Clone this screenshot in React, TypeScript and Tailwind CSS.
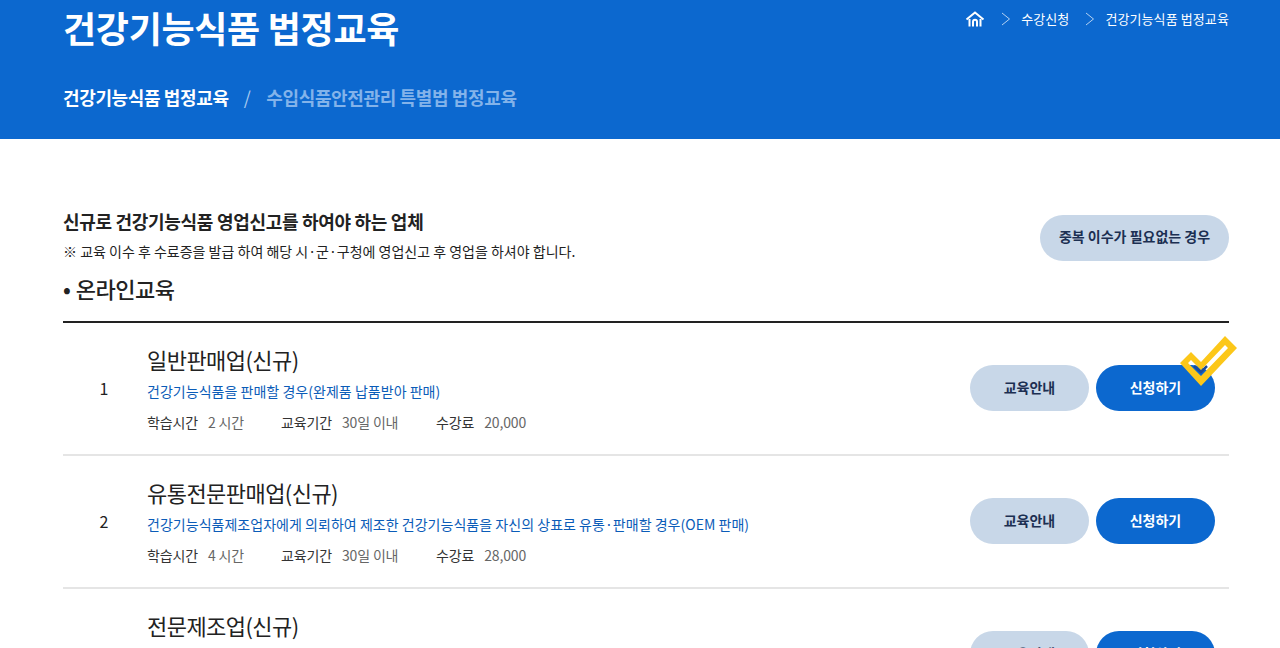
import React from 'react'

const FONT = "font-['Noto_Sans_CJK_KR','Noto_Sans',sans-serif]"

const COURSES = [
  {
    no: 1,
    title: '일반판매업(신규)',
    desc: '건강기능식품을 판매할 경우(완제품 납품받아 판매)',
    hours: '2 시간',
    period: '30일 이내',
    fee: '20,000',
    checked: true,
  },
  {
    no: 2,
    title: '유통전문판매업(신규)',
    desc: '건강기능식품제조업자에게 의뢰하여 제조한 건강기능식품을 자신의 상표로 유통·판매할 경우(OEM 판매)',
    hours: '4 시간',
    period: '30일 이내',
    fee: '28,000',
    checked: false,
  },
  {
    no: 3,
    title: '전문제조업(신규)',
    desc: '건강기능식품을 제조하여 판매할 경우',
    hours: '8 시간',
    period: '30일 이내',
    fee: '40,000',
    checked: false,
  },
]

function HomeIcon() {
  return (
    <svg width="20" height="16" viewBox="0 0 20 16" fill="none" stroke="white" strokeWidth="2">
      <path d="M1.5 8.5 10 1.5l8.5 7" />
      <path d="M4.5 15.5V8M15.5 15.5V8" />
      <path d="M8 15.5v-4.7a2 2 0 0 1 4 0v4.7" />
    </svg>
  )
}

function Chevron() {
  return (
    <svg className="block" width="10" height="14" viewBox="0 0 10 14" fill="none" stroke="#b5d2f2" strokeWidth="1">
      <path d="M1 1l7.5 6L1 13" />
    </svg>
  )
}

function CheckMark() {
  return (
    <svg className="absolute left-[84px] top-[-29px]" width="57" height="51" viewBox="0 0 57 51" fill="none">
      <path d="M14 30l7 6 6-6" stroke="#1c4a9a" strokeWidth="2.5" />
      <path
        fillRule="evenodd"
        fill="#fcc719"
        d="M0 27 L11 16 L21 26 L45 0 L57 12 L21 50 Z M8 27 L21 40 L48 12 L45 9 L21 34 L11 24 Z"
      />
    </svg>
  )
}

function CourseRow({ course }: { course: (typeof COURSES)[number] }) {
  return (
    <div className="flex h-[133px] items-center border-b-2 border-[#e5e5e5] pr-[14px]">
      <div className="w-[84px] pr-[2px] pb-[2px] text-center text-[16px] text-[#222]">{course.no}</div>
      <div className="flex-1 pb-[2px]">
        <div className="text-[22px] leading-[32px] tracking-[-0.55px] text-[#222]">{course.title}</div>
        <div className="mt-[5px] text-[14px] leading-[22px] tracking-[0.03px] text-[#0b5cb8]">{course.desc}</div>
        <div className="mt-[9px] flex text-[14px] leading-[22px] tracking-[-0.15px]">
          <span className="w-[134px]">
            <span className="text-[#333]">학습시간</span>
            <span className="ml-[10px] text-[#666]">{course.hours}</span>
          </span>
          <span className="w-[155px]">
            <span className="text-[#333]">교육기간</span>
            <span className="ml-[10px] text-[#666]">{course.period}</span>
          </span>
          <span>
            <span className="text-[#333]">수강료</span>
            <span className="ml-[10px] text-[#666]">{course.fee}</span>
          </span>
        </div>
      </div>
      <div className="flex gap-[7px] pb-[1px]">
        <button className="h-[46px] w-[119px] rounded-full bg-[#c8d7e8] pb-[1px] text-[14px] font-bold text-[#1c2f52]">
          교육안내
        </button>
        <div className="relative">
          <button className="h-[46px] w-[119px] rounded-full bg-[#0c68cf] pb-[1px] text-[14px] font-bold text-white">
            신청하기
          </button>
          {course.checked && <CheckMark />}
        </div>
      </div>
    </div>
  )
}

export default function App() {
  return (
    <div className={`${FONT} h-[648px] overflow-hidden bg-white`}>
      {/* Header */}
      <div className="h-[139px] bg-[#0c68cf] px-[63px] pr-[51px]">
        <div className="flex items-start justify-between">
          <h1 className="text-[36px] leading-[54px] font-bold tracking-[-0.3px] text-white">건강기능식품 법정교육</h1>
          <div className="flex items-center pt-[10px] text-[13px] leading-[18px] tracking-[0.1px] text-white">
            <HomeIcon />
            <span className="ml-[16px]"><Chevron /></span>
            <span className="ml-[10px]">수강신청</span>
            <span className="ml-[16px]"><Chevron /></span>
            <span className="ml-[10px]">건강기능식품 법정교육</span>
          </div>
        </div>
        <div className="mt-[29px] flex items-center text-[18px] leading-[28px] font-bold tracking-[-0.37px]">
          <span className="text-white">건강기능식품 법정교육</span>
          <span className="ml-[15px] font-normal text-[#a9cbf0]">/</span>
          <span className="ml-[16px] text-[#83b3ea]">수입식품안전관리 특별법 법정교육</span>
        </div>
      </div>

      {/* Content */}
      <div className="px-[63px] pr-[51px] pt-[68px]">
        <div className="flex items-start justify-between">
          <div>
            <div className="text-[18px] leading-[28px] font-bold tracking-[-0.3px] text-[#222]">
              신규로 건강기능식품 영업신고를 하여야 하는 업체
            </div>
            <div className="mt-[5px] text-[14px] leading-[22px] text-[#222]">
              ※ 교육 이수 후 수료증을 발급 하여 해당 시·군·구청에 영업신고 후 영업을 하셔야 합니다.
            </div>
          </div>
          <button className="mt-[8px] h-[46px] w-[189px] rounded-full bg-[#c8d7e8] pb-[3px] text-[14px] font-bold text-[#1c2f52]">
            중복 이수가 필요없는 경우
          </button>
        </div>
        <div className="mt-[10px] border-b-2 border-[#222] pb-[17px] text-[22px] leading-[32px] font-medium tracking-[-0.5px] text-[#222]">
          • <span className="ml-[1px]">온라인교육</span>
        </div>
        {COURSES.map(c => (
          <CourseRow key={c.no} course={c} />
        ))}
      </div>
    </div>
  )
}
